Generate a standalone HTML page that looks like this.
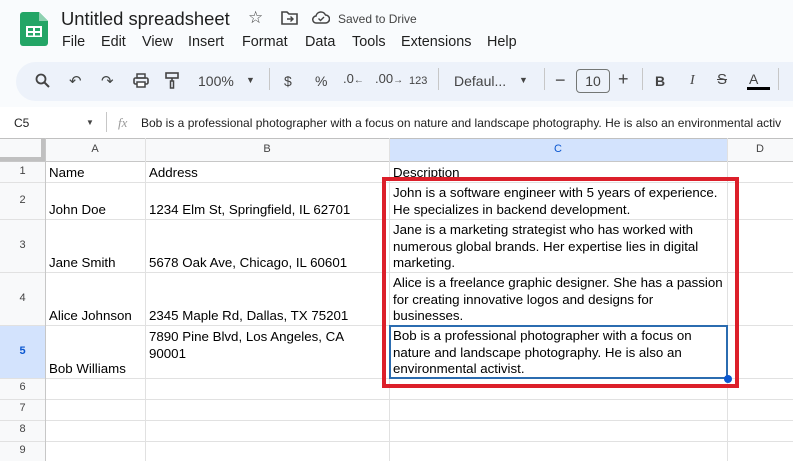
<!DOCTYPE html>
<html><head><meta charset="utf-8"><style>
*{margin:0;padding:0;box-sizing:border-box}
body{width:793px;height:461px;overflow:hidden;background:#f9fbfd;font-family:"Liberation Sans",Arial,sans-serif;color:#1f1f1f;position:relative}
.a{position:absolute;white-space:nowrap}
.tb{position:absolute;left:16px;top:62px;width:800px;height:39px;background:#edf2fa;border-radius:20px}
.ic{position:absolute;font-size:15px;color:#444746}
.grid{position:absolute;left:0;top:138px;width:793px;height:323px;background:#fff}
.hl{position:absolute;left:0;width:793px;height:1px;background:#e1e1e1}
.vl{position:absolute;top:0;width:1px;height:323px;background:#e1e1e1}
.rh{position:absolute;left:0;width:45px;text-align:center;font-size:11px;color:#444}
.ch{position:absolute;top:0;height:23px;line-height:23px;text-align:center;font-size:11px;color:#444}
.c{position:absolute;font-size:13.3px;line-height:16.5px;white-space:nowrap;color:#000}
</style></head><body>
<svg class="a" style="left:20px;top:12px" width="28" height="34" viewBox="0 0 28 34"><path d="M3 0h16l9 9v22a3 3 0 0 1-3 3H3a3 3 0 0 1-3-3V3a3 3 0 0 1 3-3z" fill="#23a566"/><path d="M19 0v9h9z" fill="#8ed1b1"/><rect x="6" y="14" width="16" height="11" fill="#fff"/><rect x="8" y="16" width="5" height="3" fill="#23a566"/><rect x="15" y="16" width="5" height="3" fill="#23a566"/><rect x="8" y="21" width="5" height="2.5" fill="#23a566"/><rect x="15" y="21" width="5" height="2.5" fill="#23a566"/></svg>
<div class="a" style="left:61px;top:8px;font-size:18.4px;color:#1f1f1f">Untitled spreadsheet</div>
<div class="a" style="left:248px;top:8px;font-size:17px;color:#444">☆</div>
<svg class="a" style="left:281px;top:11px" width="17" height="14" viewBox="0 0 17 14"><path d="M1 1h5l2 2h8v10H1z" fill="none" stroke="#444" stroke-width="1.6"/><path d="M6 8h6M9.5 5.5l2.5 2.5-2.5 2.5" fill="none" stroke="#444" stroke-width="1.4"/></svg>
<svg class="a" style="left:312px;top:11px" width="18" height="13" viewBox="0 0 18 13"><path d="M4.5 12a3.5 3.5 0 0 1-.5-7 5 5 0 0 1 9.5-1A4 4 0 0 1 13.5 12z" fill="none" stroke="#444" stroke-width="1.5"/><path d="M6.5 7.5l2 2 3.5-3.5" fill="none" stroke="#444" stroke-width="1.4"/></svg>
<div class="a" style="left:338px;top:12px;font-size:12px;color:#444">Saved to Drive</div>
<div class="a" style="left:62px;top:34px;font-size:14.4px;color:#1f1f1f">
<span style="position:absolute;left:0">File</span><span style="position:absolute;left:39px">Edit</span><span style="position:absolute;left:80px">View</span><span style="position:absolute;left:126px">Insert</span><span style="position:absolute;left:180px">Format</span><span style="position:absolute;left:243px">Data</span><span style="position:absolute;left:290px">Tools</span><span style="position:absolute;left:339px">Extensions</span><span style="position:absolute;left:425px">Help</span></div>
<div class="tb"></div>
<svg class="a" style="left:35px;top:73px" width="15" height="15" viewBox="0 0 15 15"><circle cx="6" cy="6" r="4.5" fill="none" stroke="#444" stroke-width="1.8"/><path d="M9.5 9.5l4.5 4.5" stroke="#444" stroke-width="2"/></svg>
<div class="ic" style="left:69px;top:72px">↶</div>
<div class="ic" style="left:101px;top:72px">↷</div>
<svg class="a" style="left:133px;top:73px" width="16" height="15" viewBox="0 0 16 15"><rect x="1" y="5" width="14" height="6" rx="1.5" fill="none" stroke="#444" stroke-width="1.6"/><rect x="4" y="1" width="8" height="4" fill="none" stroke="#444" stroke-width="1.5"/><rect x="4" y="9" width="8" height="5" fill="#fff" stroke="#444" stroke-width="1.5"/></svg>
<svg class="a" style="left:165px;top:72px" width="14" height="17" viewBox="0 0 14 17"><rect x="1" y="1" width="12" height="5" fill="none" stroke="#444" stroke-width="1.6"/><path d="M7 6v3" stroke="#444" stroke-width="1.6"/><rect x="5.5" y="9" width="3" height="7" fill="none" stroke="#444" stroke-width="1.5"/></svg>
<div class="a" style="left:198px;top:73px;font-size:14px;color:#444">100%</div>
<div class="a" style="left:246px;top:75px;font-size:9px;color:#444">▼</div>
<div class="a" style="left:269px;top:68px;width:1px;height:22px;background:#c7c7c7"></div>
<div class="a" style="left:284px;top:73px;font-size:14px;color:#444">$</div>
<div class="a" style="left:315px;top:73px;font-size:14px;color:#444">%</div>
<div class="a" style="left:343px;top:71px;font-size:13px;color:#444">.0<span style="font-size:10px">←</span></div>
<div class="a" style="left:375px;top:71px;font-size:13px;color:#444">.00<span style="font-size:10px">→</span></div>
<div class="a" style="left:409px;top:75px;font-size:11px;color:#444">123</div>
<div class="a" style="left:438px;top:68px;width:1px;height:22px;background:#c7c7c7"></div>
<div class="a" style="left:454px;top:73px;font-size:14px;color:#444">Defaul...</div>
<div class="a" style="left:519px;top:75px;font-size:9px;color:#444">▼</div>
<div class="a" style="left:544px;top:68px;width:1px;height:22px;background:#c7c7c7"></div>
<div class="a" style="left:555px;top:70px;font-size:18px;color:#444">−</div>
<div class="a" style="left:576px;top:69px;width:34px;height:24px;border:1px solid #747775;border-radius:4px;text-align:center;line-height:22px;font-size:14px;color:#444">10</div>
<div class="a" style="left:618px;top:69px;font-size:18px;color:#444">+</div>
<div class="a" style="left:642px;top:68px;width:1px;height:22px;background:#c7c7c7"></div>
<div class="a" style="left:655px;top:73px;font-size:14px;font-weight:bold;color:#444">B</div>
<div class="a" style="left:690px;top:73px;font-size:14px;font-style:italic;font-family:'Liberation Serif',serif;color:#444">I</div>
<div class="a" style="left:717px;top:71px;font-size:15px;color:#444;text-decoration:line-through">S</div>
<div class="a" style="left:749px;top:71px;font-size:14px;color:#444">A</div>
<div class="a" style="left:747px;top:87px;width:23px;height:3px;background:#000"></div>
<div class="a" style="left:778px;top:68px;width:1px;height:22px;background:#c7c7c7"></div>
<div class="a" style="left:0;top:107px;width:793px;height:31px;background:#fff"></div>
<div class="a" style="left:14px;top:116px;font-size:12px;color:#1f1f1f">C5</div>
<div class="a" style="left:86px;top:118px;font-size:8px;color:#444">▼</div>
<div class="a" style="left:106px;top:112px;width:1px;height:20px;background:#c7c7c7"></div>
<div class="a" style="left:118px;top:115px;font-size:13px;font-style:italic;font-family:'Liberation Serif',serif;color:#999">fx</div>
<div class="a" style="left:141px;top:116px;font-size:12px;color:#1f1f1f">Bob is a professional photographer with a focus on nature and landscape photography. He is also an environmental activ</div>
<div class="grid">
<div class="a" style="left:0;top:0;width:793px;height:23px;background:#f8f9fa"></div>
<div class="a" style="left:389px;top:0;width:338px;height:23px;background:#d3e3fd"></div>
<div class="a" style="left:0;top:187px;width:45px;height:53px;background:#d3e3fd"></div>
<div class="a" style="left:0;top:23px;width:45px;height:164px;background:#f8f9fa"></div>
<div class="a" style="left:0;top:240px;width:45px;height:83px;background:#f8f9fa"></div>
<div class="a" style="left:0;top:0;width:45px;height:23px;background:#f8f9fa;border-right:4px solid #c0c0c0;border-bottom:4px solid #c0c0c0"></div>
<div class="hl" style="top:0;background:#c0c0c0"></div>
<div class="hl" style="top:23px;background:#c7c7c7"></div>
<div class="hl" style="top:44px"></div><div class="hl" style="top:81px"></div><div class="hl" style="top:134px"></div><div class="hl" style="top:187px"></div><div class="hl" style="top:240px"></div><div class="hl" style="top:261px"></div><div class="hl" style="top:282px"></div><div class="hl" style="top:303px"></div>
<div class="vl" style="left:45px;background:#c7c7c7"></div><div class="vl" style="left:145px"></div><div class="vl" style="left:389px"></div><div class="vl" style="left:727px"></div>
<div class="ch" style="left:45px;width:100px">A</div><div class="ch" style="left:145px;width:244px">B</div><div class="ch" style="left:389px;width:338px;color:#0b57d0">C</div><div class="ch" style="left:727px;width:66px">D</div>
<div class="rh" style="top:27px">1</div><div class="rh" style="top:56px">2</div><div class="rh" style="top:101px">3</div><div class="rh" style="top:154px">4</div><div class="rh" style="top:207px;font-weight:bold;color:#0b57d0">5</div><div class="rh" style="top:243px">6</div><div class="rh" style="top:264px">7</div><div class="rh" style="top:285px">8</div><div class="rh" style="top:306px">9</div>
<div class="c" style="left:49px;top:27px">Name</div><div class="c" style="left:149px;top:27px">Address</div><div class="c" style="left:393px;top:27px">Description</div>
<div class="c" style="left:49px;top:64px">John Doe</div><div class="c" style="left:149px;top:64px">1234 Elm St, Springfield, IL 62701</div>
<div class="c" style="left:49px;top:117px">Jane Smith</div><div class="c" style="left:149px;top:117px">5678 Oak Ave, Chicago, IL 60601</div>
<div class="c" style="left:49px;top:170px">Alice Johnson</div><div class="c" style="left:149px;top:170px">2345 Maple Rd, Dallas, TX 75201</div>
<div class="c" style="left:49px;top:223px">Bob Williams</div><div class="c" style="left:149px;top:191px">7890 Pine Blvd, Los Angeles, CA<br>90001</div>
<div class="c" style="left:393px;top:47px">John is a software engineer with 5 years of experience.<br>He specializes in backend development.</div>
<div class="c" style="left:393px;top:84px">Jane is a marketing strategist who has worked with<br>numerous global brands. Her expertise lies in digital<br>marketing.</div>
<div class="c" style="left:393px;top:137px">Alice is a freelance graphic designer. She has a passion<br>for creating innovative logos and designs for<br>businesses.</div>
<div class="c" style="left:393px;top:190px">Bob is a professional photographer with a focus on<br>nature and landscape photography. He is also an<br>environmental activist.</div>
<div class="a" style="left:389px;top:187px;width:339px;height:54px;border:2px solid #2b6cb0"></div>
<div class="a" style="left:724px;top:237px;width:8px;height:8px;border-radius:50%;background:#0b57d0"></div>
<div class="a" style="left:382px;top:39px;width:357px;height:211px;border:4px solid #dc1f2a"></div>
</div>
</body></html>
